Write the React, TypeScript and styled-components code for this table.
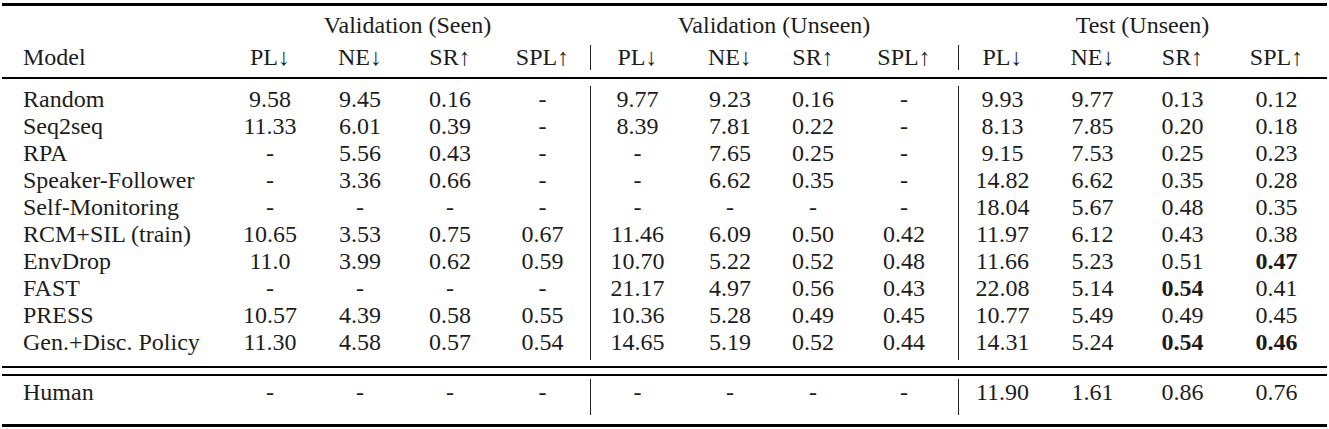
import styled, { createGlobalStyle } from 'styled-components'

const GlobalStyle = createGlobalStyle`
    html, body {
        margin: 0;
        padding: 0;
        background: #ffffff;
    }
    body {
        font-family: 'Liberation Serif', 'Times New Roman', serif;
        color: #1c1c1c;
    }
`

const COLS = '223px 90px 90px 90px 95px 94px 92px 74px 108px 88px 93px 87px 101px'

const Page = styled.div`
    width: 1325px;
    margin: 0 2px;
    padding-top: 3px;
    font-size: 24px;
`

const Rule = styled.div<{ $h: number; $mt?: number; $mb?: number }>`
    height: ${(p) => p.$h}px;
    margin-top: ${(p) => p.$mt ?? 0}px;
    margin-bottom: ${(p) => p.$mb ?? 0}px;
    background: #000;
`

const Row = styled.div<{ $lh: number; $pt?: number; $pb?: number }>`
    display: grid;
    grid-template-columns: ${COLS};
    line-height: ${(p) => p.$lh}px;

    & > div {
        padding-top: ${(p) => p.$pt ?? 0}px;
        padding-bottom: ${(p) => p.$pb ?? 0}px;
    }
`

const GroupRow = styled.div`
    display: grid;
    grid-template-columns: ${COLS};
    line-height: 27px;
    padding: 6px 0;
`

const Group = styled.div<{ $span: string }>`
    grid-column: ${(p) => p.$span};
    text-align: center;
    white-space: nowrap;
`

const NameCell = styled.div`
    padding-left: 21px;
    white-space: nowrap;
`

const Cell = styled.div<{ $bar?: boolean; $bold?: boolean }>`
    text-align: center;
    white-space: nowrap;
    border-left: ${(p) => (p.$bar ? '1.5px solid #222' : 'none')};
    font-weight: ${(p) => (p.$bold ? 700 : 400)};
`

const metrics = ['PL↓', 'NE↓', 'SR↑', 'SPL↑']

const rows: { name: string; values: string[] }[] = [
    { name: 'Random', values: ['9.58', '9.45', '0.16', '-', '9.77', '9.23', '0.16', '-', '9.93', '9.77', '0.13', '0.12'] },
    { name: 'Seq2seq', values: ['11.33', '6.01', '0.39', '-', '8.39', '7.81', '0.22', '-', '8.13', '7.85', '0.20', '0.18'] },
    { name: 'RPA', values: ['-', '5.56', '0.43', '-', '-', '7.65', '0.25', '-', '9.15', '7.53', '0.25', '0.23'] },
    { name: 'Speaker-Follower', values: ['-', '3.36', '0.66', '-', '-', '6.62', '0.35', '-', '14.82', '6.62', '0.35', '0.28'] },
    { name: 'Self-Monitoring', values: ['-', '-', '-', '-', '-', '-', '-', '-', '18.04', '5.67', '0.48', '0.35'] },
    { name: 'RCM+SIL (train)', values: ['10.65', '3.53', '0.75', '0.67', '11.46', '6.09', '0.50', '0.42', '11.97', '6.12', '0.43', '0.38'] },
    { name: 'EnvDrop', values: ['11.0', '3.99', '0.62', '0.59', '10.70', '5.22', '0.52', '0.48', '11.66', '5.23', '0.51', '*0.47'] },
    { name: 'FAST', values: ['-', '-', '-', '-', '21.17', '4.97', '0.56', '0.43', '22.08', '5.14', '*0.54', '0.41'] },
    { name: 'PRESS', values: ['10.57', '4.39', '0.58', '0.55', '10.36', '5.28', '0.49', '0.45', '10.77', '5.49', '0.49', '0.45'] },
    { name: 'Gen.+Disc. Policy', values: ['11.30', '4.58', '0.57', '0.54', '14.65', '5.19', '0.52', '0.44', '14.31', '5.24', '*0.54', '*0.46'] },
]

const human = ['-', '-', '-', '-', '-', '-', '-', '-', '11.90', '1.61', '0.86', '0.76']

// a leading * marks a bold (best) value
const renderValues = (values: string[]) =>
    values.map((v, i) => {
        const bold = v.startsWith('*')
        return (
            <Cell key={i} $bar={i === 4 || i === 8} $bold={bold}>
                {bold ? v.slice(1) : v}
            </Cell>
        )
    })

export default function App() {
    return (
        <Page>
            <GlobalStyle />
            <Rule $h={3} />

            <GroupRow>
                <Group $span="2 / 6">Validation (Seen)</Group>
                <Group $span="6 / 10">Validation (Unseen)</Group>
                <Group $span="10 / 14">Test (Unseen)</Group>
            </GroupRow>

            <Row $lh={25}>
                <NameCell>Model</NameCell>
                {[0, 1, 2].flatMap((g) =>
                    metrics.map((m, i) => (
                        <Cell key={`${g}-${m}`} $bar={g > 0 && i === 0}>
                            {m}
                        </Cell>
                    ))
                )}
            </Row>

            <Rule $h={2} $mt={7} $mb={7} />

            {rows.map((r, idx) => (
                <Row key={r.name} $lh={27} $pb={idx === rows.length - 1 ? 4 : 0}>
                    <NameCell>{r.name}</NameCell>
                    {renderValues(r.values)}
                </Row>
            ))}

            <Rule $h={2} $mt={6} />
            <Rule $h={2} $mt={6} $mb={3} />

            <Row $lh={27} $pb={9}>
                <NameCell>Human</NameCell>
                {renderValues(human)}
            </Row>

            <Rule $h={3} $mt={9} />
        </Page>
    )
}
